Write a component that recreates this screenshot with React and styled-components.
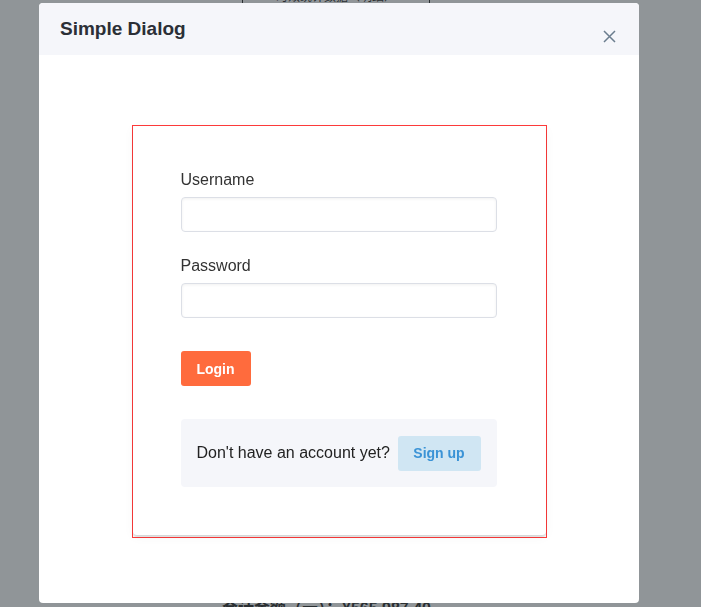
import React from 'react';
import styled, { createGlobalStyle } from 'styled-components';

const GlobalStyle = createGlobalStyle`
  html, body {
    margin: 0;
    padding: 0;
    background: #ffffff;
    font-family: "Liberation Sans", Arial, sans-serif;
    overflow: hidden;
  }
`;

const Page = styled.div`
  height: 607px;
  display: flex;
  flex-direction: column;
  justify-content: space-between;
  align-items: flex-start;
  overflow: hidden;
`;

const TopCell = styled.div`
  margin: -14px 0 0 242px;
  width: 186px;
  height: 20px;
  border-left: 1px solid #333;
  border-right: 1px solid #333;
  text-align: center;
  font-size: 12px;
  line-height: 20px;
  color: #333;
  font-family: "Noto Sans CJK SC", sans-serif;
`;

const Total = styled.div`
  margin: 0 0 -12px 222px;
  font-size: 16px;
  font-weight: bold;
  color: #333;
  font-family: "Liberation Sans", "Noto Sans CJK SC", sans-serif;
`;

const Overlay = styled.div`
  position: fixed;
  inset: 0;
  background: rgba(34, 44, 50, 0.5);
  display: flex;
  align-items: flex-start;
`;

const Modal = styled.div`
  margin: 3px 0 0 39px;
  width: 600px;
  height: 600px;
  background: #ffffff;
  border-radius: 4px;
  overflow: hidden;
  display: flex;
  flex-direction: column;
`;

const Header = styled.div`
  position: relative;
  height: 52px;
  flex-shrink: 0;
  background: #f5f6fa;
  padding: 0 21px;
  display: flex;
  align-items: center;
`;

const Title = styled.h2`
  margin: 0;
  font-size: 19px;
  font-weight: bold;
  color: #2b2f36;
`;

const CloseBtn = styled.button`
  position: absolute;
  top: 24px;
  right: 21px;
  width: 18px;
  height: 18px;
  padding: 0;
  border: none;
  background: none;
  display: flex;
  align-items: center;
  justify-content: center;
  cursor: pointer;
`;

const Body = styled.div`
  flex: 1;
  display: flex;
  justify-content: center;
  padding-top: 70px;
`;

const Frame = styled.div`
  width: 413px;
  height: 411px;
  border: 1px solid #ff3b3b;
`;

const Card = styled.div`
  height: calc(100% - 2px);
  box-sizing: border-box;
  padding: 45px 48px 0;
  border-radius: 4px;
  background: #fff;
  box-shadow: 0 2px 2px rgba(0, 0, 0, 0.14), 0 2px 12px rgba(0, 0, 0, 0.04);
`;

const Field = styled.div`
  display: flex;
  flex-direction: column;
  margin-bottom: ${(p) => p.gap || 0}px;
`;

const Label = styled.label`
  font-size: 16px;
  line-height: 18px;
  color: #333;
  margin-bottom: 8px;
`;

const Input = styled.input`
  width: 316px;
  height: 35px;
  box-sizing: border-box;
  border: 1px solid #dcdfe6;
  border-radius: 4px;
  box-shadow: inset 0 1px 3px rgba(0, 0, 0, 0.06);
  outline: none;
  padding: 0 10px;
  font-size: 14px;
`;

const LoginBtn = styled.button`
  margin-top: 33px;
  width: 70px;
  height: 35px;
  border: none;
  border-radius: 3px;
  background: #ff6b3d;
  color: #fff;
  font-family: "Liberation Sans", Arial, sans-serif;
  font-size: 14px;
  font-weight: bold;
  cursor: pointer;
`;

const SignupBox = styled.div`
  margin-top: 33px;
  width: 316px;
  height: 68px;
  box-sizing: border-box;
  padding: 0 16px;
  background: #f5f6fa;
  border-radius: 4px;
  display: flex;
  align-items: center;
  justify-content: space-between;
  font-size: 16px;
  color: #222;
`;

const SignupBtn = styled.button`
  width: 83px;
  height: 35px;
  border: none;
  border-radius: 3px;
  background: #d0e6f3;
  color: #3a93d6;
  font-family: "Liberation Sans", Arial, sans-serif;
  font-size: 14px;
  font-weight: bold;
  cursor: pointer;
`;

export default function App() {
  return (
    <>
      <GlobalStyle />
      <Page>
        <TopCell>时效统计数据（明细）</TopCell>
        <Total>合计金额（元）：¥565,987.40</Total>
      </Page>
      <Overlay>
        <Modal>
          <Header>
            <Title>Simple Dialog</Title>
            <CloseBtn aria-label="Close">
              <svg width="13" height="13" viewBox="0 0 13 13">
                <path d="M1 1L12 12M12 1L1 12" stroke="#6b7d8e" strokeWidth="1.5" />
              </svg>
            </CloseBtn>
          </Header>
          <Body>
            <Frame>
              <Card>
                <Field gap={25}>
                  <Label>Username</Label>
                  <Input type="text" />
                </Field>
                <Field>
                  <Label>Password</Label>
                  <Input type="password" />
                </Field>
                <LoginBtn>Login</LoginBtn>
                <SignupBox>
                  <span>Don't have an account yet?</span>
                  <SignupBtn>Sign up</SignupBtn>
                </SignupBox>
              </Card>
            </Frame>
          </Body>
        </Modal>
      </Overlay>
    </>
  );
}
